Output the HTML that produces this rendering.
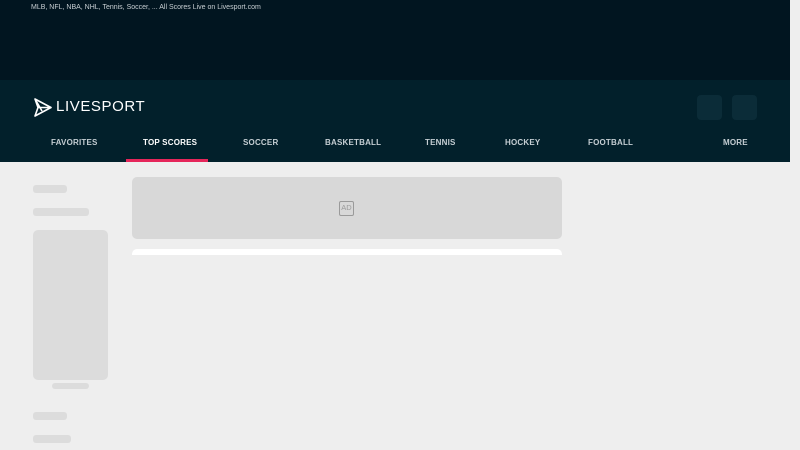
<!DOCTYPE html>
<html><head><meta charset="utf-8"><style>
*{margin:0;padding:0;box-sizing:border-box}
body{width:800px;height:450px;overflow:hidden;background:#eeeeee;font-family:"Liberation Sans",sans-serif;position:relative}
.top{position:absolute;left:0;top:0;width:790px;height:80px;background:#011520}
.top span{position:absolute;left:31px;top:4px;font-size:7px;color:#c8cfd3}
.nav{position:absolute;left:0;top:80px;width:790px;height:82px;background:#02202b}
.logo{position:absolute;left:34px;top:98px}
.lt{position:absolute;left:56px;top:98px;color:#fff;font-size:15px;letter-spacing:0.6px;line-height:18px}
.btn{position:absolute;top:95px;width:25px;height:25px;border-radius:4px;background:#0b2c38}
.tab{position:absolute;top:138px;font-size:8px;font-weight:bold;color:#c5ced3;letter-spacing:0.2px}
.act{color:#fff}
.ul{position:absolute;left:126px;top:159px;width:82px;height:3px;background:#e5265a}
.sk{position:absolute;background:#dcdcdc;border-radius:3px}
</style></head><body>
<div class="top"><span>MLB, NFL, NBA, NHL, Tennis, Soccer, ... All Scores Live on Livesport.com</span></div>
<div class="nav"></div>
<svg class="logo" width="18" height="19" viewBox="0 0 18 19"><path d="M1 1 L17 9.5 L1 18 L4 9.5 Z M4 9.5 L17 9.5 M1 1 L8 13" fill="none" stroke="#fff" stroke-width="1.6" stroke-linejoin="round"/></svg>
<div class="lt">LIVESPORT</div>
<div class="btn" style="left:697px"></div>
<div class="btn" style="left:732px"></div>
<div class="tab" style="left:51px">FAVORITES</div>
<div class="tab act" style="left:143px">TOP SCORES</div>
<div class="tab" style="left:243px">SOCCER</div>
<div class="tab" style="left:325px">BASKETBALL</div>
<div class="tab" style="left:425px">TENNIS</div>
<div class="tab" style="left:505px">HOCKEY</div>
<div class="tab" style="left:588px">FOOTBALL</div>
<div class="tab" style="left:723px">MORE</div>
<div class="ul"></div>
<div class="sk" style="left:33px;top:185px;width:34px;height:8px"></div>
<div class="sk" style="left:33px;top:208px;width:56px;height:8px"></div>
<div class="sk" style="left:33px;top:230px;width:75px;height:150px;border-radius:5px"></div>
<div class="sk" style="left:52px;top:383px;width:37px;height:6px"></div>
<div class="sk" style="left:33px;top:412px;width:34px;height:8px"></div>
<div class="sk" style="left:33px;top:435px;width:38px;height:8px"></div>
<div class="sk" style="left:132px;top:177px;width:430px;height:62px;border-radius:5px;background:#d8d8d8"></div>
<div style="position:absolute;left:339px;top:201px;width:15px;height:15px;border:1.3px solid #9a9a9a;border-radius:2px;font-size:7.5px;color:#9a9a9a;text-align:center;line-height:12px">AD</div>
<div style="position:absolute;left:132px;top:249px;width:430px;height:6px;background:#fff;border-radius:5px 5px 0 0"></div>
</body></html>
